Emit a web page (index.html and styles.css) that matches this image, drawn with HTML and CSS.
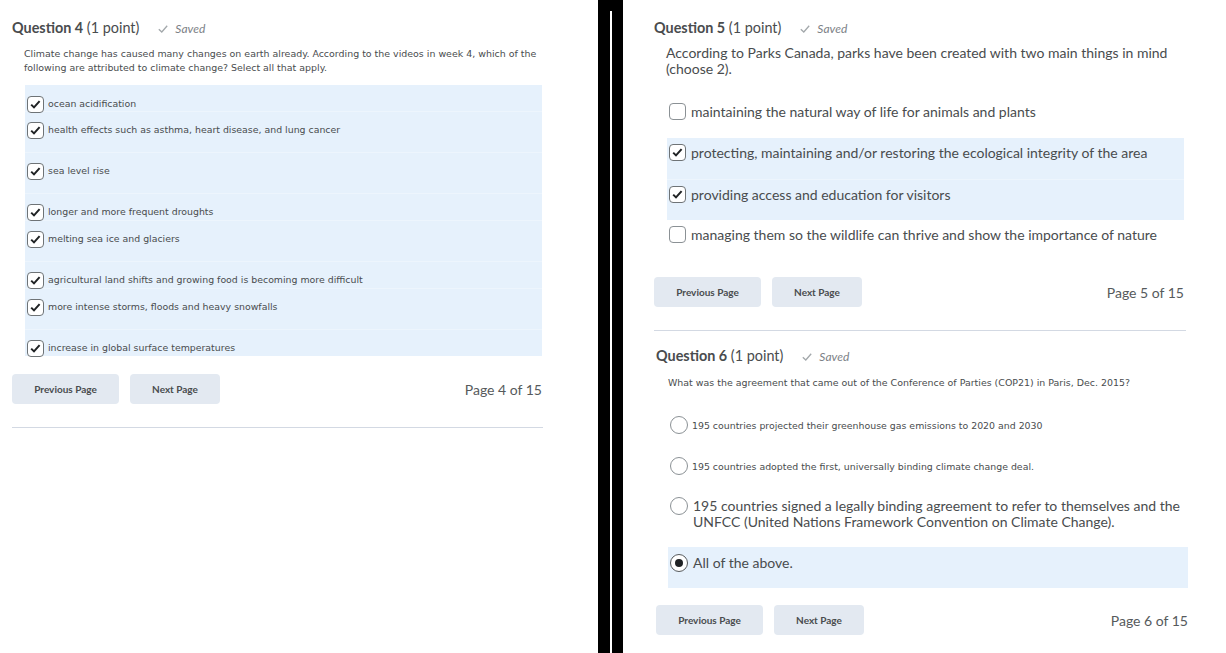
FILE: index.html
```html
<!DOCTYPE html>
<html lang="en">
<head>
<meta charset="utf-8">
<title>Quiz</title>
<link rel="stylesheet" href="styles.css">
</head>
<body>
<div class="page">
  <section class="panel panel-left">
    <div class="q-head"><b>Question 4</b>&nbsp;(1 point)<span class="saved"><svg class="saved-icon" viewBox="0 0 10 8" width="10" height="8"><path d="M0.8 4.2 L3.8 7 L9.2 0.8" fill="none" stroke="#a3a8ab" stroke-width="1.3"/></svg>Saved</span></div>
    <p class="q-text-sm">Climate change has caused many changes on earth already. According to the videos in week 4, which of the following are attributed to climate change? Select all that apply.</p>
    <div class="options options-sm">
      <div class="opt sel h-first"><span class="cb on"><svg viewBox="0 0 17 17"><path d="M4.2 8.6 L7 11.4 L12.6 5.2" fill="none" stroke="#1f2224" stroke-width="2"/></svg></span><span class="opt-t">ocean acidification</span></div>
      <div class="opt sel h-l"><span class="cb on"><svg viewBox="0 0 17 17"><path d="M4.2 8.6 L7 11.4 L12.6 5.2" fill="none" stroke="#1f2224" stroke-width="2"/></svg></span><span class="opt-t">health effects such as asthma, heart disease, and lung cancer</span></div>
      <div class="opt sel h-l"><span class="cb on"><svg viewBox="0 0 17 17"><path d="M4.2 8.6 L7 11.4 L12.6 5.2" fill="none" stroke="#1f2224" stroke-width="2"/></svg></span><span class="opt-t">sea level rise</span></div>
      <div class="opt sel h-s"><span class="cb on"><svg viewBox="0 0 17 17"><path d="M4.2 8.6 L7 11.4 L12.6 5.2" fill="none" stroke="#1f2224" stroke-width="2"/></svg></span><span class="opt-t">longer and more frequent droughts</span></div>
      <div class="opt sel h-l"><span class="cb on"><svg viewBox="0 0 17 17"><path d="M4.2 8.6 L7 11.4 L12.6 5.2" fill="none" stroke="#1f2224" stroke-width="2"/></svg></span><span class="opt-t">melting sea ice and glaciers</span></div>
      <div class="opt sel h-s"><span class="cb on"><svg viewBox="0 0 17 17"><path d="M4.2 8.6 L7 11.4 L12.6 5.2" fill="none" stroke="#1f2224" stroke-width="2"/></svg></span><span class="opt-t">agricultural land shifts and growing food is becoming more difficult</span></div>
      <div class="opt sel h-l"><span class="cb on"><svg viewBox="0 0 17 17"><path d="M4.2 8.6 L7 11.4 L12.6 5.2" fill="none" stroke="#1f2224" stroke-width="2"/></svg></span><span class="opt-t">more intense storms, floods and heavy snowfalls</span></div>
      <div class="opt sel h-s"><span class="cb on"><svg viewBox="0 0 17 17"><path d="M4.2 8.6 L7 11.4 L12.6 5.2" fill="none" stroke="#1f2224" stroke-width="2"/></svg></span><span class="opt-t">increase in global surface temperatures</span></div>
    </div>
    <div class="nav nav-left">
      <button class="btn btn-prev">Previous Page</button>
      <button class="btn btn-next">Next Page</button>
      <span class="page-num">Page 4 of 15</span>
    </div>
    <div class="rule rule-left"></div>
  </section>

  <div class="divider"><div class="divider-line"></div></div>

  <section class="panel panel-right">
    <div class="q-head"><b>Question 5</b>&nbsp;(1 point)<span class="saved"><svg class="saved-icon" viewBox="0 0 10 8" width="10" height="8"><path d="M0.8 4.2 L3.8 7 L9.2 0.8" fill="none" stroke="#a3a8ab" stroke-width="1.3"/></svg>Saved</span></div>
    <p class="q-text-lg">According to Parks Canada, parks have been created with two main things in mind (choose 2).</p>
    <div class="options options-lg">
      <div class="opt row-41"><span class="cb off"></span><span class="opt-t">maintaining the natural way of life for animals and plants</span></div>
      <div class="opt sel row-41"><span class="cb on"><svg viewBox="0 0 17 17"><path d="M4.2 8.6 L7 11.4 L12.6 5.2" fill="none" stroke="#1f2224" stroke-width="2"/></svg></span><span class="opt-t">protecting, maintaining and/or restoring the ecological integrity of the area</span></div>
      <div class="opt sel row-41"><span class="cb on"><svg viewBox="0 0 17 17"><path d="M4.2 8.6 L7 11.4 L12.6 5.2" fill="none" stroke="#1f2224" stroke-width="2"/></svg></span><span class="opt-t">providing access and education for visitors</span></div>
      <div class="opt row-41"><span class="cb off"></span><span class="opt-t">managing them so the wildlife can thrive and show the importance of nature</span></div>
    </div>
    <div class="nav nav-q5">
      <button class="btn btn-prev">Previous Page</button>
      <button class="btn btn-next">Next Page</button>
      <span class="page-num">Page 5 of 15</span>
    </div>
    <div class="rule rule-right"></div>

    <div class="q6">
      <div class="q-head"><b>Question 6</b>&nbsp;(1 point)<span class="saved"><svg class="saved-icon" viewBox="0 0 10 8" width="10" height="8"><path d="M0.8 4.2 L3.8 7 L9.2 0.8" fill="none" stroke="#a3a8ab" stroke-width="1.3"/></svg>Saved</span></div>
      <p class="q-text-sm q6-text">What was the agreement that came out of the Conference of Parties (COP21) in Paris, Dec. 2015?</p>
      <div class="options options-radio">
        <div class="opt row-41"><span class="rb"></span><span class="opt-t small">195 countries projected their greenhouse gas emissions to 2020 and 2030</span></div>
        <div class="opt row-41"><span class="rb"></span><span class="opt-t small">195 countries adopted the first, universally binding climate change deal.</span></div>
        <div class="opt row-56"><span class="rb"></span><span class="opt-t">195 countries signed a legally binding agreement to refer to themselves and the UNFCC (United Nations Framework Convention on Climate Change).</span></div>
        <div class="opt sel row-41"><span class="rb on"><span class="rb-dot"></span></span><span class="opt-t">All of the above.</span></div>
      </div>
      <div class="nav nav-q6">
        <button class="btn btn-prev">Previous Page</button>
        <button class="btn btn-next">Next Page</button>
        <span class="page-num">Page 6 of 15</span>
      </div>
    </div>
  </section>
</div>
</body>
</html>
```

FILE: styles.css
```css
html, body {
  margin: 0;
  padding: 0;
  background: #ffffff;
}

body {
  font-family: Lato, "Noto Sans", sans-serif;
  color: #494c4e;
}

.page {
  display: grid;
  grid-template-columns: 598px 25px 1fr;
  height: 653px;
  overflow: hidden;
}

.panel {
  padding-top: 18px;
  min-width: 0;
}

.panel-left {
  padding-left: 12px;
  padding-right: 55px;
}

.panel-right {
  padding-left: 31px;
  padding-right: 40px;
}

.divider {
  background: #000000;
  display: flex;
  justify-content: center;
  padding-top: 11px;
}

.divider-line {
  width: 2px;
  background: #ffffff;
}

/* headings */
.q-head {
  display: flex;
  align-items: baseline;
  height: 20px;
  overflow: visible;
  font-size: 14.4px;
  line-height: 20px;
  color: #494c4e;
  white-space: nowrap;
}

.q-head b {
  font-weight: 700;
}

.saved {
  margin-left: 19px;
  font-size: 12px;
  line-height: 14px;
  font-style: italic;
  color: #7c8186;
  display: inline-flex;
  align-items: center;
}

.saved-icon {
  margin-right: 7px;
}

/* question text */
.q-text-sm {
  font-family: "DejaVu Sans", Verdana, sans-serif;
  font-size: 9.45px;
  line-height: 14px;
  margin: 9px 0 10px 12px;
  color: #494c4e;
}

.q-text-lg {
  font-size: 14px;
  line-height: 16px;
  margin: 7px 0 20px 12px;
  color: #494c4e;
}

/* options */
.options-sm {
  margin-left: 13px;
  margin-right: 1px;
}

.options-lg {
  margin-left: 13px;
  margin-right: 2px;
}

.opt {
  display: flex;
  align-items: flex-start;
  box-sizing: border-box;
  padding-left: 2px;
}

.opt.sel {
  background: #e6f1fc;
}

.opt.sel + .opt.sel {
  border-top: 1px solid #edf5fd;
}

.options-sm .opt {
  padding-top: 9px;
  align-items: center;
  align-content: flex-start;
  flex-wrap: wrap;
}

.options-sm .h-first {
  padding-top: 10px;
}

.h-first { height: 26px; }
.h-s { height: 27px; }
.h-l { height: 41px; }

.opt-t {
  margin-left: 4px;
}

.options-sm .opt-t {
  font-family: "DejaVu Sans", Verdana, sans-serif;
  font-size: 9.4px;
  line-height: 18px;
}

.row-41 {
  height: 41px;
  padding-top: 6px;
}

.options-radio .row-41 {
  padding-top: 7px;
}

.row-56 {
  height: 56px;
  padding-top: 6px;
}

.options-lg .opt-t,
.options-radio .opt-t {
  font-size: 14px;
  line-height: 16px;
  margin-left: 5px;
  margin-top: 0;
}

.options-lg .opt-t {
  line-height: 17px;
}

.options-radio .opt-t {
  line-height: 16px;
  margin-top: 1px;
}

.options-radio .opt-t.small {
  font-family: "DejaVu Sans", Verdana, sans-serif;
  font-size: 9.4px;
  line-height: 18px;
  margin-left: 4px;
  margin-top: 1px;
}

/* checkbox */
.cb {
  flex: 0 0 auto;
  width: 17px;
  height: 17px;
  box-sizing: border-box;
  border-radius: 4px;
  background: #ffffff;
  display: inline-flex;
  align-items: center;
  justify-content: center;
}

.cb.on {
  border: 1px solid #6e7376;
}

.cb.off {
  border: 1px solid #8b9195;
}

.cb svg {
  width: 17px;
  height: 17px;
  display: block;
  margin: -1px;
}

/* radio */
.options-radio {
  margin-left: 12px;
}

.rb {
  flex: 0 0 auto;
  width: 18px;
  height: 18px;
  box-sizing: border-box;
  border-radius: 50%;
  border: 1px solid #8b9195;
  background: #ffffff;
  display: inline-flex;
  align-items: center;
  justify-content: center;
}

.rb.on {
  border: 1.5px solid #565a5c;
}

.rb-dot {
  width: 8px;
  height: 8px;
  border-radius: 50%;
  background: #1f2224;
}

/* nav */
.nav {
  display: flex;
  align-items: center;
  gap: 11px;
}

.nav-left { margin-top: 18px; }
.nav-q5 { margin-top: 16px; }
.nav-q6 { margin-top: 17px; }

.btn {
  font-family: Lato, "Noto Sans", sans-serif;
  font-weight: 700;
  font-size: 10px;
  color: #494c4e;
  background: #e3e9f1;
  border: none;
  border-radius: 4px;
  height: 30px;
  padding: 0;
}

.btn-prev { width: 107px; }
.btn-next { width: 90px; }

.page-num {
  margin-left: auto;
  font-size: 14px;
  color: #565a5c;
}

.nav-left .page-num { margin-right: 1px; }
.nav-q5 .page-num { margin-right: 2px; }

.rule {
  height: 1px;
  background: #d3d9e3;
  margin-top: 23px;
}

.q6 {
  margin-left: 2px;
  margin-top: 15px;
  margin-right: -2px;
}

.q6-text {
  margin: 10px 0 19px 12px;
}
```
